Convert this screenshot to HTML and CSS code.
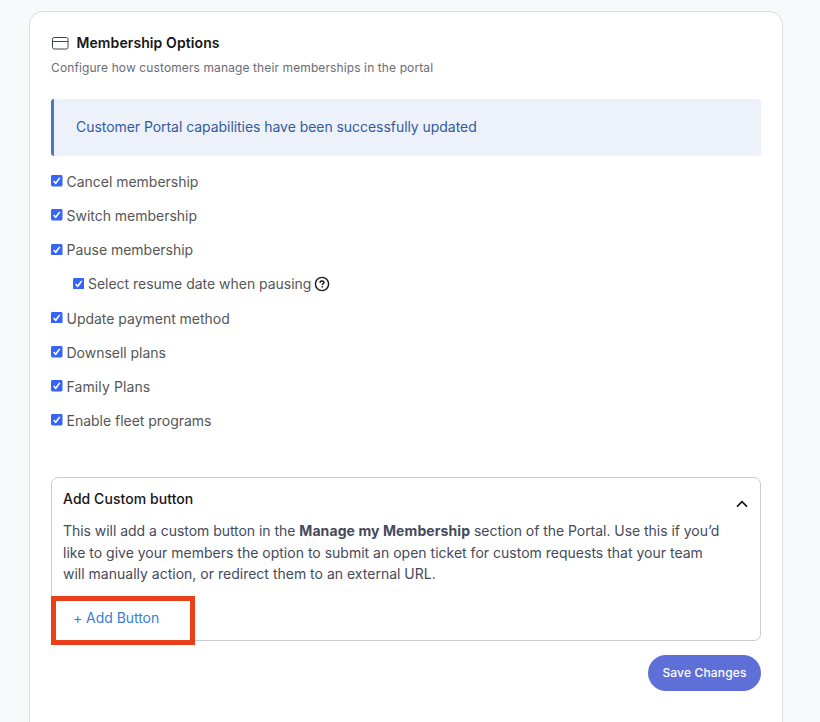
FILE: index.html
```html
<!DOCTYPE html>
<html lang="en">
<head>
<meta charset="utf-8">
<title>Membership Options</title>
<link rel="stylesheet" href="styles.css">
</head>
<body>
<main class="card">
  <header class="header">
    <svg class="card-icon" width="17" height="13" viewBox="0 0 17 13" fill="none" stroke="#3f4552"><rect x=".5" y=".5" width="15.5" height="11.5" rx="1.7"/><path d="M.5 4.5H16"/></svg>
    <h1 class="title"><span>Membership Options</span></h1>
  </header>
  <p class="subtitle"><span>Configure how customers manage their memberships in the portal</span></p>
  <div class="notice"><span>Customer Portal capabilities have been successfully updated</span></div>
  <div class="options">
    <label class="option"><svg class="check" viewBox="0 0 12 12"><rect width="12" height="12" rx="1.5"/><path d="M2.8 6.4 5 8.7 9.1 3"/></svg><span>Cancel membership</span></label>
    <label class="option"><svg class="check" viewBox="0 0 12 12"><rect width="12" height="12" rx="1.5"/><path d="M2.8 6.4 5 8.7 9.1 3"/></svg><span>Switch membership</span></label>
    <label class="option"><svg class="check" viewBox="0 0 12 12"><rect width="12" height="12" rx="1.5"/><path d="M2.8 6.4 5 8.7 9.1 3"/></svg><span>Pause membership</span></label>
    <label class="option nested"><svg class="check" viewBox="0 0 12 12"><rect width="12" height="12" rx="1.5"/><path d="M2.8 6.4 5 8.7 9.1 3"/></svg><span>Select resume date when pausing</span><svg class="help" width="16" height="16" viewBox="0 0 16 16" fill="none" stroke="#161616" stroke-width="1.4"><circle cx="8" cy="8" r="6.6"/><path d="M6.1 6.7c0-1 .8-1.7 1.9-1.7s1.9.7 1.9 1.6c0 1.1-1.7 1.3-1.7 2.4M8.2 10.1v1.4"/></svg></label>
    <label class="option"><svg class="check" viewBox="0 0 12 12"><rect width="12" height="12" rx="1.5"/><path d="M2.8 6.4 5 8.7 9.1 3"/></svg><span>Update payment method</span></label>
    <label class="option"><svg class="check" viewBox="0 0 12 12"><rect width="12" height="12" rx="1.5"/><path d="M2.8 6.4 5 8.7 9.1 3"/></svg><span>Downsell plans</span></label>
    <label class="option wide"><svg class="check" viewBox="0 0 12 12"><rect width="12" height="12" rx="1.5"/><path d="M2.8 6.4 5 8.7 9.1 3"/></svg><span>Family Plans</span></label>
    <label class="option"><svg class="check" viewBox="0 0 12 12"><rect width="12" height="12" rx="1.5"/><path d="M2.8 6.4 5 8.7 9.1 3"/></svg><span>Enable fleet programs</span></label>
  </div>
  <section class="panel">
    <div class="panel-head">
      <h2 class="panel-title">Add Custom button</h2>
      <svg class="chevron" width="12" height="8" viewBox="0 0 12 8" fill="none" stroke="#161616" stroke-width="1.7"><path d="M1 6.6 6 1.7l5 4.9"/></svg>
    </div>
    <p class="panel-text"><span class="lead">This will add a custom button in the <b>Manage my Membership</b> section of the Portal. Use this if you’d</span><br>like to give your members the option to submit an open ticket for custom requests that your team<br>will manually action, or redirect them to an external URL.</p>
    <a class="add">+ Add Button</a>
    <div class="highlight"></div>
  </section>
  <div class="actions"><button class="save">Save Changes</button></div>
</main>
</body>
</html>
```
FILE: styles.css
```css
* { box-sizing: border-box; }
body {
  margin: 0;
  height: 722px;
  overflow: hidden;
  padding: 11px 37px 0 29px;
  background: #f8f9fb;
  font-family: Inter, "Liberation Sans", sans-serif;
  font-size: 14px;
}
h1, h2, p { margin: 0; }
.card {
  height: 711px;
  padding: 21px 21px 0;
  background: #fff;
  border: 1px solid #dcdee1;
  border-bottom: 0;
  border-radius: 14px 14px 0 0;
}
.header { display: flex; align-items: center; gap: 7.5px; height: 20px; padding-left: 1px; }
.title { font-size: 14px; line-height: 20px; font-weight: 600; color: #161616; letter-spacing: .09px; }
.subtitle { margin-top: 6px; font-size: 12px; line-height: 18px; color: #6a6c74; letter-spacing: .11px; }
.notice {
  margin-top: 22px;
  height: 57px;
  padding-left: 22px;
  border-left: 3px solid #4b78c4;
  border-radius: 3px;
  background: #edf2fa;
  color: #355a9c;
  line-height: 56px;
  letter-spacing: -.05px;
}
.options { display: grid; grid-auto-rows: 34.15px; margin-top: 9px; }
.option { display: flex; align-items: center; gap: 4px; color: #565656; line-height: 20px; letter-spacing: -.02px; }
.wide { letter-spacing: .1px; }
.nested { padding-left: 21.5px; }
.check { width: 11.5px; height: 11.5px; margin-bottom: 2px; fill: #3564f6; flex: none; }
.check path { fill: none; stroke: #fff; stroke-width: 1.7; }
.help { margin: 0 0 1px -1px; }
.panel {
  position: relative;
  margin-top: 39px;
  height: 164px;
  padding: 11px 11px 0;
  border: 1px solid #caccd4;
  border-radius: 7px;
}
.panel-head { display: flex; justify-content: space-between; align-items: center; height: 20px; }
.panel-title { font-size: 14px; font-weight: 500; line-height: 20px; color: #161616; letter-spacing: .06px; }
.chevron { margin: 9px 1px 0 0; }
.panel-text { margin-top: 11px; line-height: 21.6px; color: #454a5a; white-space: nowrap; letter-spacing: .005px; }
.lead { letter-spacing: -.04px; }
.panel-text b { letter-spacing: .09px; }
.add { display: block; width: 110px; margin: 23px 0 0 10px; line-height: 20px; color: #3b7dd8; letter-spacing: -.05px; }
.highlight {
  position: absolute;
  left: -1px;
  top: 118px;
  width: 144px;
  height: 49px;
  border: 5px solid #e9401b;
}
.actions { display: flex; justify-content: flex-end; margin-top: 14px; }
.save {
  width: 113px;
  height: 36px;
  padding: 0;
  border: 0;
  border-radius: 18px;
  background: #5e6fd8;
  color: #fff;
  font: 500 12px/36px Inter, "Liberation Sans", sans-serif;
  letter-spacing: .16px;
}
```
